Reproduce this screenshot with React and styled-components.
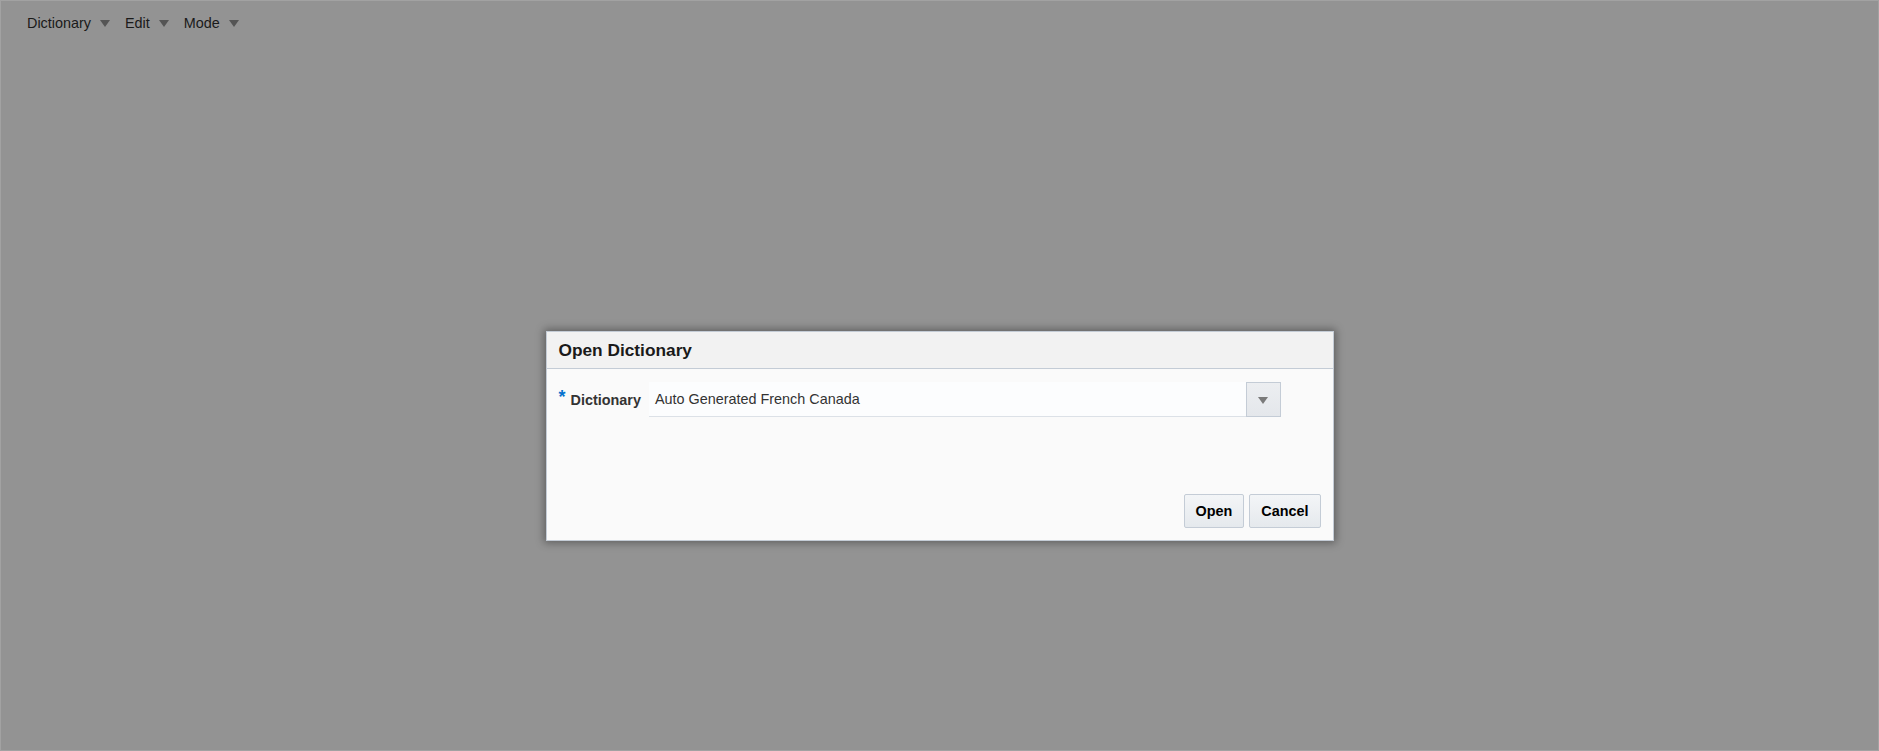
import React from "react";
import styled, { createGlobalStyle } from "styled-components";

const GlobalStyle = createGlobalStyle`
  html, body {
    margin: 0;
    padding: 0;
    height: 100%;
  }
  body {
    font-family: "Liberation Sans", Arial, sans-serif;
    background: #939393;
  }
  #root {
    height: 100%;
  }
`;

const Page = styled.div`
  position: relative;
  box-sizing: border-box;
  height: 751px;
  border: 1px solid #a2a2a2;
  background-color: #939393;
  overflow: hidden;
`;

const MenuBar = styled.nav`
  display: flex;
  align-items: center;
  padding: 14px 0 0 26px;
`;

const MenuItem = styled.div`
  display: flex;
  align-items: center;
  gap: 9px;
  margin-right: 15px;
  font-size: 14.4px;
  color: #1a1a1a;
  cursor: pointer;
`;

const Caret = styled.span`
  width: 0;
  height: 0;
  border-left: ${(p) => p.size}px solid transparent;
  border-right: ${(p) => p.size}px solid transparent;
  border-top: ${(p) => p.size * 1.4}px solid ${(p) => p.color};
  margin-top: 1px;
`;

const Overlay = styled.div`
  position: absolute;
  inset: 0;
  display: flex;
  justify-content: center;
  align-items: flex-start;
  padding-top: 330px;
`;

const Dialog = styled.div`
  width: 788px;
  box-sizing: border-box;
  border: 1px solid #c4ccd6;
  background: #fafafa;
  box-shadow: 0 0 8px 2px rgba(0, 0, 0, 0.35);
`;

const Header = styled.div`
  height: 36px;
  display: flex;
  align-items: center;
  padding: 0 12px;
  background: #f2f2f2;
  border-bottom: 1px solid #c4ccd6;
`;

const Title = styled.h1`
  margin: 0;
  font-size: 17.3px;
  font-weight: bold;
  color: #1a1a1a;
`;

const Body = styled.div`
  padding: 13px 12px 0;
`;

const FieldRow = styled.div`
  display: flex;
  align-items: center;
`;

const Label = styled.label`
  display: flex;
  align-items: center;
  gap: 5px;
  margin-right: 8px;
  font-size: 14.4px;
  font-weight: bold;
  color: #333;
`;

const Required = styled.span`
  color: #0572ce;
  font-size: 18px;
  line-height: 1;
  margin-top: -6px;
`;

const SelectBox = styled.div`
  display: flex;
  align-items: stretch;
  height: 35px;
`;

const Value = styled.div`
  width: 597px;
  box-sizing: border-box;
  display: flex;
  align-items: center;
  padding: 0 6px;
  background: #fcfdfe;
  border-bottom: 1px solid #dce1e7;
  font-size: 14.4px;
  color: #333;
`;

const DropButton = styled.div`
  width: 35px;
  box-sizing: border-box;
  display: flex;
  align-items: center;
  justify-content: center;
  border: 1px solid #c4ccd6;
  background: linear-gradient(#eceef1, #e4e7eb);
`;

const Footer = styled.div`
  display: flex;
  justify-content: flex-end;
  gap: 5px;
  margin-top: 77px;
  padding: 0 0 12px;
`;

const Button = styled.button`
  height: 34px;
  box-sizing: border-box;
  padding: 0 ${(p) => p.pad}px;
  border: 1px solid #c4ccd6;
  border-radius: 2px;
  background: linear-gradient(#f3f5f7, #e5e9ed);
  font-family: "Liberation Sans", Arial, sans-serif;
  font-size: 14.4px;
  font-weight: bold;
  color: #000;
  cursor: pointer;
`;

export default function App() {
  const menus = ["Dictionary", "Edit", "Mode"];
  return (
    <>
      <GlobalStyle />
      <Page>
        <MenuBar>
          {menus.map((m) => (
            <MenuItem key={m}>
              {m}
              <Caret size={5} color="#555" />
            </MenuItem>
          ))}
        </MenuBar>
        <Overlay>
          <Dialog>
            <Header>
              <Title>Open Dictionary</Title>
            </Header>
            <Body>
              <FieldRow>
                <Label>
                  <Required>*</Required>
                  Dictionary
                </Label>
                <SelectBox>
                  <Value>Auto Generated French Canada</Value>
                  <DropButton>
                    <Caret size={5.5} color="#7a7a7a" />
                  </DropButton>
                </SelectBox>
              </FieldRow>
              <Footer>
                <Button pad={11}>Open</Button>
                <Button pad={11}>Cancel</Button>
              </Footer>
            </Body>
          </Dialog>
        </Overlay>
      </Page>
    </>
  );
}
